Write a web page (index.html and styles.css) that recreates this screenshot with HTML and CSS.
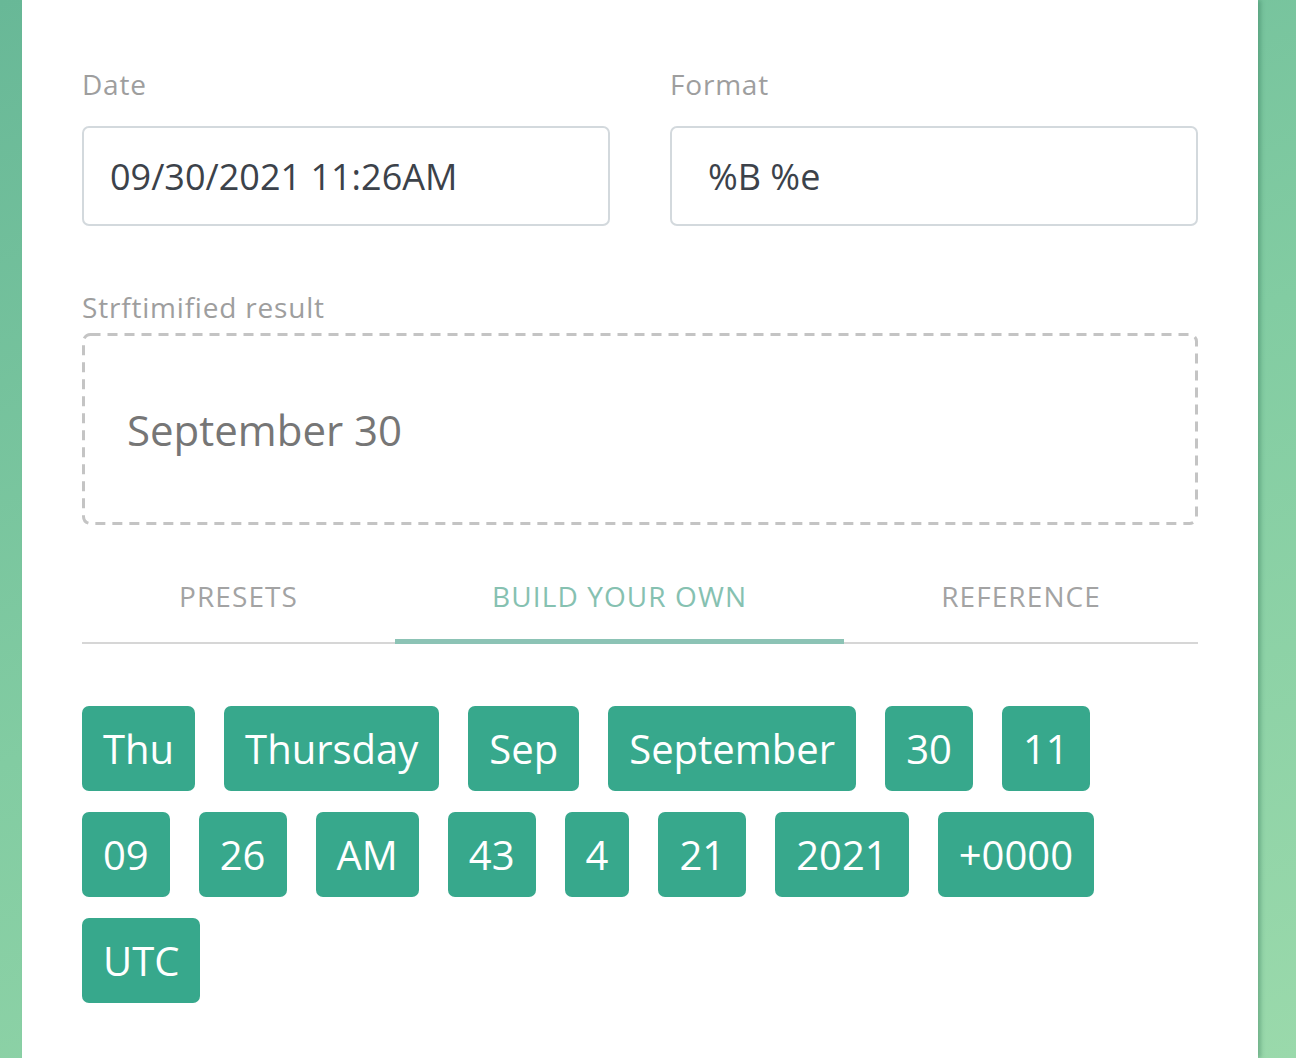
FILE: index.html
```html
<!DOCTYPE html>
<html>
<head>
<meta charset="utf-8">
<link rel="stylesheet" href="styles.css">
</head>
<body>
<div class="page">
  <main class="card">
    <div class="fields">
      <div class="field">
        <div class="label">Date</div>
        <div class="input">09/30/2021 11:26AM</div>
      </div>
      <div class="field">
        <div class="label">Format</div>
        <div class="input input-format">%B %e</div>
      </div>
    </div>
    <div class="label result-label">Strftimified result</div>
    <div class="result">September 30</div>
    <nav class="tabs">
      <div class="tab">PRESETS</div>
      <div class="tab active">BUILD YOUR OWN</div>
      <div class="tab">REFERENCE</div>
    </nav>
    <div class="chips">
      <span class="chip">Thu</span>
      <span class="chip">Thursday</span>
      <span class="chip">Sep</span>
      <span class="chip">September</span>
      <span class="chip">30</span>
      <span class="chip">11</span>
      <span class="chip">09</span>
      <span class="chip">26</span>
      <span class="chip">AM</span>
      <span class="chip">43</span>
      <span class="chip">4</span>
      <span class="chip">21</span>
      <span class="chip">2021</span>
      <span class="chip">+0000</span>
      <span class="chip">UTC</span>
    </div>
  </main>
</div>
</body>
</html>
```

FILE: styles.css
```css
html, body {
  margin: 0;
  padding: 0;
  height: 100%;
}
body {
  background: linear-gradient(160deg, #68b897 0%, #82cca2 50%, #9ad9ab 100%);
  font-family: "Open Sans", "Noto Sans", sans-serif;
  overflow: hidden;
}
.page {
  padding: 0 38px 0 22px;
  height: 100%;
}
.card {
  background: #fff;
  height: 100%;
  box-sizing: border-box;
  padding: 67px 60px 0 60px;
  box-shadow: 3px 0 4px rgba(40, 110, 80, 0.35);
}
.fields {
  display: grid;
  grid-template-columns: 1fr 1fr;
  column-gap: 60px;
}
.label {
  font-size: 28px;
  line-height: 34px;
  color: #9e9e9e;
  margin-bottom: 25px;
  letter-spacing: 0.8px;
}
.input {
  height: 100px;
  box-sizing: border-box;
  border: 2px solid #d3d9dd;
  border-radius: 7px;
  padding: 0 26px;
  display: flex;
  align-items: center;
  font-size: 36px;
  color: #3c424a;
}
.input-format {
  padding-left: 36px;
}
.result-label {
  margin-top: 64px;
  margin-bottom: 9px;
  font-variant-ligatures: none;
}
.result {
  height: 192px;
  box-sizing: border-box;
  background-image: url("data:image/svg+xml,%3Csvg xmlns='http://www.w3.org/2000/svg' width='1116' height='192'%3E%3Crect x='1.5' y='1.5' width='1113' height='189' rx='7' fill='none' stroke='%23c4c4c4' stroke-width='3' stroke-dasharray='10 7'/%3E%3C/svg%3E");
  background-repeat: no-repeat;
  padding: 0 45px;
  display: flex;
  align-items: center;
  font-size: 42px;
  color: #767676;
}
.tabs {
  display: flex;
  margin-top: 32px;
  border-bottom: 2px solid #d6d6d6;
}
.tab {
  flex: 1 1 auto;
  text-align: center;
  font-size: 28px;
  line-height: 78px;
  height: 82px;
  color: #a3a3a3;
  border-bottom: 5px solid transparent;
  margin-bottom: -2px;
  letter-spacing: 1.1px;
}
.tab.active {
  color: #86c1b1;
  border-bottom-color: #8cc3b5;
}
.chips {
  display: flex;
  flex-wrap: wrap;
  column-gap: 29px;
  row-gap: 21px;
  margin-top: 62px;
  padding-right: 80px;
}
.chip {
  background: #37a88c;
  color: #fff;
  height: 85px;
  line-height: 85px;
  padding: 0 21px;
  border-radius: 7px;
  font-size: 40px;
}
```
